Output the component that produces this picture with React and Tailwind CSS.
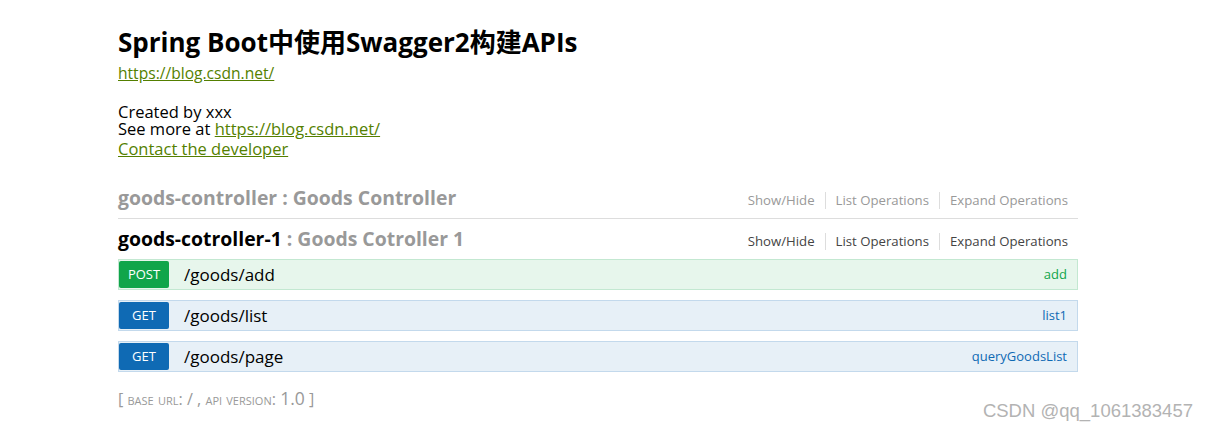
const FONT = "font-['Open_Sans','Noto_Sans_CJK_SC',sans-serif]"

const METHOD_STYLE = {
  POST: {
    row: 'bg-[#e7f6ec] border-[#c3e8d1]',
    badge: 'bg-[#10a54a]',
    text: 'text-[#10a54a]',
  },
  GET: {
    row: 'bg-[#e7f0f7] border-[#c3d9ec]',
    badge: 'bg-[#0f6ab4]',
    text: 'text-[#0f6ab4]',
  },
}

const operations = [
  { method: 'POST', path: '/goods/add', name: 'add' },
  { method: 'GET', path: '/goods/list', name: 'list1' },
  { method: 'GET', path: '/goods/page', name: 'queryGoodsList' },
]

function SectionHeader({ name, desc, active }) {
  const linkColor = active ? 'text-[#444]' : 'text-[#999]'
  return (
    <div className="flex items-end justify-between h-[41px] pb-[11px] border-b border-[#ddd]">
      <h2 className="text-[19.4px] font-bold leading-none">
        <span className={active ? 'text-black' : 'text-[#999]'}>{name}</span>
        <span className="text-[#999]"> : {desc}</span>
      </h2>
      <ul className={`flex items-center text-[13.2px] leading-none ${linkColor} pr-[10px] mb-[-2px]`}>
        <li className="pr-[10px]">Show/Hide</li>
        <li className="px-[10px] border-l border-[#ddd] py-[2px]">List Operations</li>
        <li className="pl-[10px] border-l border-[#ddd] py-[2px]">Expand Operations</li>
      </ul>
    </div>
  )
}

function OperationRow({ op }) {
  const s = METHOD_STYLE[op.method]
  return (
    <div className={`flex items-stretch h-[31px] border ${s.row}`}>
      <span className={`w-[50px] m-[1px] ml-0 rounded-[2px] flex items-center justify-center text-white text-[13px] ${s.badge}`}>
        {op.method}
      </span>
      <span className="flex-1 flex items-center pl-[14px] text-[17px] text-black">{op.path}</span>
      <span className={`flex items-center pr-[10px] text-[13px] ${s.text}`}>{op.name}</span>
    </div>
  )
}

export default function App() {
  return (
    <div className={`relative w-[1209px] h-[431px] bg-white overflow-hidden ${FONT}`}>
      <div className="ml-[118px] w-[960px] pt-[24px]">
        <h1 className="text-[26px] font-bold text-black leading-[36px]">Spring Boot中使用Swagger2构建APIs</h1>
        <div className="mt-[3px] text-[15.6px] leading-[20px]">
          <a className="text-[#547f00] underline">https://blog.csdn.net/</a>
        </div>
        <div className="mt-[20px] text-[16.5px] leading-[17px] text-black">
          <div>Created by xxx</div>
          <div>
            See more at <a className="text-[#547f00] underline">https://blog.csdn.net/</a>
          </div>
        </div>
        <div className="mt-[2px] text-[16.5px] leading-[20px]">
          <a className="text-[#547f00] underline">Contact the developer</a>
        </div>

        <div className="mt-[19px]">
          <SectionHeader name="goods-controller" desc="Goods Controller" active={false} />
        </div>
        <SectionHeader name="goods-cotroller-1" desc="Goods Cotroller 1" active />
        <div className="mt-[-1px] flex flex-col gap-[10px]">
          {operations.map(op => (
            <OperationRow key={op.path} op={op} />
          ))}
        </div>

        <div className="mt-[18px] text-[#999] text-[16.2px] [font-variant:small-caps] leading-none">
          [ base url: / , api version: <span className="text-[17.5px]">1.0</span> ]
        </div>
      </div>
      <div className="absolute right-[16px] bottom-[11px] text-[18.5px] text-[#b3b3b3] font-['Liberation_Sans',Arial,sans-serif] leading-none">
        CSDN @qq_1061383457
      </div>
    </div>
  )
}
